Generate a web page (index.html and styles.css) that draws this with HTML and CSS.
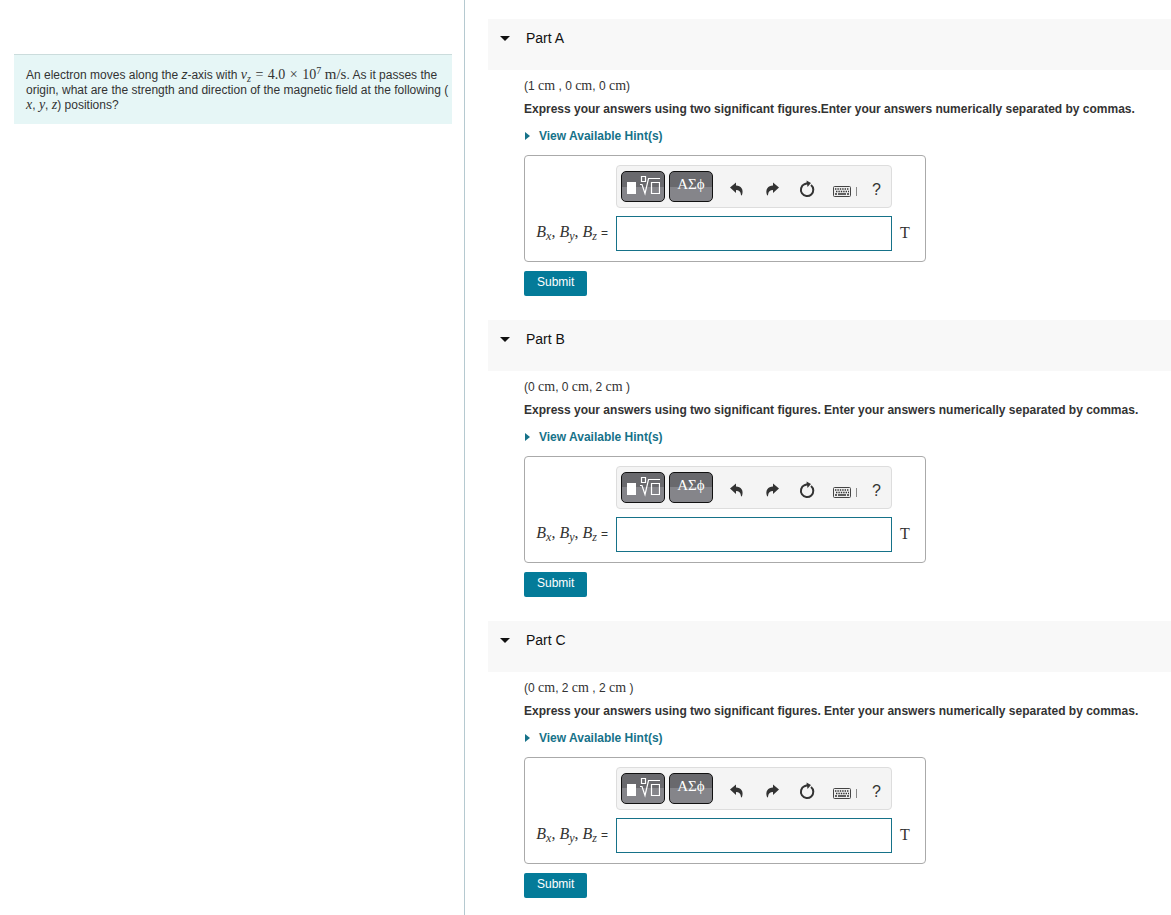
FILE: index.html
```html
<!DOCTYPE html>
<html lang="en">
<head>
<meta charset="utf-8">
<title>Magnetic field of a moving electron</title>
<link rel="stylesheet" href="styles.css">
</head>
<body>
<svg class="defs" aria-hidden="true">
  <symbol id="i-root" viewBox="0 0 34 22">
    <path d="M1 7h9v12H1z" fill="#fff"/>
    <path d="M15.500 1.500h4v5h-4zM25.500 7.500h8v11h-8z M14 9.500h2l3 9 3.500-15H34" fill="none" stroke="#fff" stroke-width="1.200"/>
  </symbol>
  <symbol id="i-undo" viewBox="0 0 14 14">
    <path d="M0 5.500L6 .5v3c5 0 8 4 6 9.500-.2.600-.9.600-1 0C10.800 9.500 9 8 6 8v3z" fill="#333"/>
  </symbol>
  <symbol id="i-redo" viewBox="0 0 14 14">
    <path d="M14 5.500L8 .5v3c-5 0-8 4-6 9.500.2.600.9.600 1 0C3.200 9.500 5 8 8 8v3z" fill="#333"/>
  </symbol>
  <symbol id="i-reset" viewBox="0 0 16 18">
    <path d="M12 5A6.200 6.200 0 1 1 5.500 4.200L9 3" fill="none" stroke="#333" stroke-width="2"/>
    <path d="M7.500 .5l4.500 2.500-3.500 4z" fill="#333"/>
  </symbol>
  <symbol id="i-keys" viewBox="0 0 18 11">
    <rect x=".5" y=".5" width="17" height="10" rx="1" fill="#eee" stroke="#444"/>
    <path d="M2 3h14M3 5.500h13" stroke="#333" stroke-width="1.400" stroke-dasharray="1.400 1"/>
    <path d="M2 8h2M5 8h8M14 8h2" stroke="#333" stroke-width="1.400"/>
  </symbol>
</svg>
<div class="page">
  <aside class="side">
    <p class="problem">An electron moves along the <i>z</i>-axis with <span class="math"><i>v<sub>z</sub></i> <span class="op">=</span> 4.0 <span class="op">×</span> 10<sup>7</sup> <span class="unit">m/s</span></span>. As it passes the origin, what are the strength and direction of the magnetic field at the following ( <i class="math">x</i>, <i class="math">y</i>, <i class="math">z</i>) positions?</p>
  </aside>
  <main class="parts">
    <section class="part">
      <h2 class="head"><button class="toggle" type="button">Part A</button></h2>
      <div class="body">
        <p class="point">(1 <span class="math">cm</span> , 0 <span class="math">cm</span>, 0 <span class="math">cm</span>)</p>
        <p class="instruction">Express your answers using two significant figures.Enter your answers numerically separated by commas.</p>
        <a class="hints" href="#">View Available Hint(s)</a>
        <form class="answer">
          <div class="box">
            <div class="tools">
              <button class="dark" type="button" aria-label="Templates"><svg class="root"><use href="#i-root"/></svg></button>
              <button class="dark greek" type="button">ΑΣϕ</button>
              <button class="tool" type="button" aria-label="Undo"><svg class="arrow"><use href="#i-undo"/></svg></button>
              <button class="tool" type="button" aria-label="Redo"><svg class="arrow"><use href="#i-redo"/></svg></button>
              <button class="tool" type="button" aria-label="Reset"><svg class="reset"><use href="#i-reset"/></svg></button>
              <button class="tool keys" type="button" aria-label="Keyboard shortcuts"><svg class="keyboard"><use href="#i-keys"/></svg></button>
              <button class="tool help" type="button">?</button>
            </div>
            <label class="name" for="field-a"><i>B<sub>x</sub></i>, <i>B<sub>y</sub></i>, <i>B<sub>z</sub></i> <span class="eq">=</span></label>
            <input class="field" id="field-a" type="text">
            <span class="tesla">T</span>
          </div>
          <button class="submit" type="submit">Submit</button>
        </form>
      </div>
    </section>
    <section class="part">
      <h2 class="head"><button class="toggle" type="button">Part B</button></h2>
      <div class="body">
        <p class="point">(0 <span class="math">cm</span>, 0 <span class="math">cm</span>, 2 <span class="math">cm</span> )</p>
        <p class="instruction">Express your answers using two significant figures. Enter your answers numerically separated by commas.</p>
        <a class="hints" href="#">View Available Hint(s)</a>
        <form class="answer">
          <div class="box">
            <div class="tools">
              <button class="dark" type="button" aria-label="Templates"><svg class="root"><use href="#i-root"/></svg></button>
              <button class="dark greek" type="button">ΑΣϕ</button>
              <button class="tool" type="button" aria-label="Undo"><svg class="arrow"><use href="#i-undo"/></svg></button>
              <button class="tool" type="button" aria-label="Redo"><svg class="arrow"><use href="#i-redo"/></svg></button>
              <button class="tool" type="button" aria-label="Reset"><svg class="reset"><use href="#i-reset"/></svg></button>
              <button class="tool keys" type="button" aria-label="Keyboard shortcuts"><svg class="keyboard"><use href="#i-keys"/></svg></button>
              <button class="tool help" type="button">?</button>
            </div>
            <label class="name" for="field-b"><i>B<sub>x</sub></i>, <i>B<sub>y</sub></i>, <i>B<sub>z</sub></i> <span class="eq">=</span></label>
            <input class="field" id="field-b" type="text">
            <span class="tesla">T</span>
          </div>
          <button class="submit" type="submit">Submit</button>
        </form>
      </div>
    </section>
    <section class="part">
      <h2 class="head"><button class="toggle" type="button">Part C</button></h2>
      <div class="body">
        <p class="point">(0 <span class="math">cm</span>, 2 <span class="math">cm</span> , 2 <span class="math">cm</span> )</p>
        <p class="instruction">Express your answers using two significant figures. Enter your answers numerically separated by commas.</p>
        <a class="hints" href="#">View Available Hint(s)</a>
        <form class="answer">
          <div class="box">
            <div class="tools">
              <button class="dark" type="button" aria-label="Templates"><svg class="root"><use href="#i-root"/></svg></button>
              <button class="dark greek" type="button">ΑΣϕ</button>
              <button class="tool" type="button" aria-label="Undo"><svg class="arrow"><use href="#i-undo"/></svg></button>
              <button class="tool" type="button" aria-label="Redo"><svg class="arrow"><use href="#i-redo"/></svg></button>
              <button class="tool" type="button" aria-label="Reset"><svg class="reset"><use href="#i-reset"/></svg></button>
              <button class="tool keys" type="button" aria-label="Keyboard shortcuts"><svg class="keyboard"><use href="#i-keys"/></svg></button>
              <button class="tool help" type="button">?</button>
            </div>
            <label class="name" for="field-c"><i>B<sub>x</sub></i>, <i>B<sub>y</sub></i>, <i>B<sub>z</sub></i> <span class="eq">=</span></label>
            <input class="field" id="field-c" type="text">
            <span class="tesla">T</span>
          </div>
          <button class="submit" type="submit">Submit</button>
        </form>
      </div>
    </section>
  </main>
</div>
</body>
</html>
```
FILE: styles.css
```css
* { box-sizing: border-box; }
body {
  margin: 0;
  background: #fff;
  color: #333;
  font: 12px/16px "Liberation Sans", Arial, sans-serif;
}
button, input { font: inherit; }
p, h2 { margin: 0; }
.defs { display: none; }
svg { display: block; }

.page {
  display: grid;
  grid-template-columns: 465px minmax(0, 1fr);
  min-height: 100vh;
}
.side {
  border-right: 1px solid #b5c9d0;
  padding: 54px 12px 0 14px;
}
.problem {
  background: #e6f6f6;
  border-top: 1px solid #cbdcdc;
  padding: 12px 2px 11px 12px;
  line-height: 15px;
}
.math {
  font-family: "Liberation Serif", "Times New Roman", serif;
  font-size: 14px;
  line-height: 12px;
}
.problem .math { white-space: nowrap; }
.op { margin: 0 1px; }
.unit { font-size: 15px; }
sub, sup { font-size: 10px; line-height: 8px; }
sub { vertical-align: -3px; }
sup { vertical-align: 5px; }

.parts { padding: 19px 0 0 23px; }
.part { margin-bottom: 24px; }
.part:last-child { margin-bottom: 0; }
.head {
  background: #f8f8f8;
  height: 51px;
  padding: 9px 12px;
  font-weight: normal;
}
.toggle {
  display: flex;
  align-items: center;
  gap: 16px;
  border: 0;
  padding: 0;
  background: none;
  color: #111;
  font-size: 14px;
  line-height: 20px;
}
.toggle::before {
  content: "";
  border: 5px solid transparent;
  border-top-color: #111;
  border-bottom: 0;
}
.body { padding: 8px 12px 0 36px; }
.instruction { margin-top: 7px; font-weight: bold; }
.hints {
  display: flex;
  align-items: center;
  gap: 9px;
  margin-top: 11px;
  color: #167289;
  font-weight: bold;
  text-decoration: none;
}
.hints::before {
  content: "";
  margin-left: 1px;
  border: 4px solid transparent;
  border-left: 5px solid #167289;
  border-right: 0;
}
.box {
  display: grid;
  grid-template-columns: 73px 276px auto;
  column-gap: 8px;
  row-gap: 8px;
  align-items: center;
  width: 402px;
  max-width: 100%;
  margin-top: 11px;
  padding: 9px 10px 10px;
  border: 1px solid #aaa;
  border-radius: 4px;
}
.tools {
  grid-column: 2;
  display: flex;
  align-items: center;
  height: 43px;
  padding: 0 4px;
  border: 1px solid #ddd;
  border-radius: 4px;
  background: #f4f4f4;
}
.dark {
  display: grid;
  place-items: center;
  width: 44px;
  height: 31px;
  margin-right: 4px;
  padding: 0 0 2px;
  border: 1px solid #111;
  border-radius: 5px;
  background: linear-gradient(#69696d 0 50%, #85858a 50% 100%);
  color: #fff;
}
.greek {
  margin-right: 6px;
  padding-bottom: 5px;
  font-family: "Liberation Serif", serif;
  font-size: 15px;
  line-height: 20px;
}
.root { width: 34px; height: 22px; }
.tool {
  display: grid;
  place-items: center;
  width: 35px;
  height: 31px;
  padding: 5px 0 0;
  border: 0;
  background: none;
  color: #333;
}
.arrow { width: 14px; height: 14px; }
.reset { width: 16px; height: 18px; }
.keyboard { width: 18px; height: 11px; }
.keys {
  grid-template-columns: auto 1px;
  justify-content: center;
  gap: 5px;
  width: 42px;
  padding-top: 9px;
}
.keys::after {
  content: "";
  width: 1px;
  height: 9px;
  background: #888;
}
.help { flex: 1; padding-top: 6px; font-size: 16px; }
.name {
  grid-column: 1;
  padding-bottom: 2px;
  font-family: "Liberation Serif", serif;
  font-size: 16px;
  white-space: nowrap;
  text-align: right;
}
.name sub { font-size: 12px; }
.eq { font-family: "Liberation Sans", sans-serif; font-size: 12px; }
.field {
  width: 100%;
  height: 35px;
  padding: 0 8px;
  border: 1px solid #167289;
  background: #fff;
}
.tesla {
  padding-bottom: 2px;
  font: 16px/16px "Liberation Serif", serif;
}
.submit {
  display: block;
  margin-top: 9px;
  height: 25px;
  padding: 0 13px 4px;
  border: 0;
  border-radius: 2px;
  background: #047b99;
  color: #fff;
  font-size: 12px;
}
```
